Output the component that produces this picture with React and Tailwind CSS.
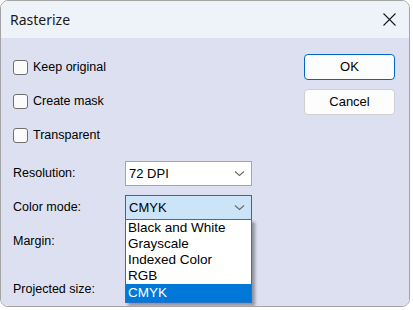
import React from "react";

const body = { fontFamily: '"Liberation Sans", Arial, sans-serif' };

function Check({ label }) {
  return (
    <div className="h-[34px] flex items-center gap-[5px]">
      <div className="w-[15px] h-[15px] rounded-[3px] border border-[#6f6f6f] bg-[#fbfbfb]" />
      <span className="text-[12.5px] text-black">{label}</span>
    </div>
  );
}

function Chevron() {
  return (
    <svg width="11" height="7" viewBox="0 0 11 7" className="mr-[6px]">
      <path d="M1 1.5 L5.5 5.5 L10 1.5" fill="none" stroke="#6a6a6a" strokeWidth="1.1" />
    </svg>
  );
}

function Select({ value, active }) {
  return (
    <div
      className={
        "w-[127px] h-[25px] flex items-center justify-between pl-[3px] border " +
        (active ? "bg-[#cce4f7] border-[#0078d7]" : "bg-white border-[#a5a5a5]")
      }
    >
      <span className="text-[13px] text-black">{value}</span>
      <Chevron />
    </div>
  );
}

export default function App() {
  const items = ["Black and White", "Grayscale", "Indexed Color", "RGB"];
  return (
    <div className="w-[413px] h-[310px] bg-white" style={body}>
      <div className="w-[410px] h-[307px] rounded-[8px] border border-[#a3a3a3] overflow-hidden flex flex-col">
        <div className="h-[37px] bg-[#eef2f9] flex items-center justify-between pl-[9px] pr-[13px] shrink-0">
          <span
            className="text-[14px] text-[#1a1a1a]"
            style={{ fontFamily: '"Noto Sans", sans-serif' }}
          >
            Rasterize
          </span>
          <svg width="13" height="13" viewBox="0 0 13 13">
            <path d="M0.5 0.5 L12.5 12.5 M12.5 0.5 L0.5 12.5" stroke="#1a1a1a" strokeWidth="1.1" />
          </svg>
        </div>
        <div className="flex-1 bg-[#dce0f0] flex justify-between pl-[12px] pr-[14px]">
          <div className="flex flex-col pt-[12px] relative">
            <Check label="Keep original" />
            <Check label="Create mask" />
            <Check label="Transparent" />
            <div className="mt-[9px] flex items-center h-[25px]">
              <span className="w-[112px] text-[12.5px]">Resolution:</span>
              <Select value="72 DPI" />
            </div>
            <div className="mt-[9px] flex items-center h-[25px] relative">
              <span className="w-[112px] text-[12.5px]">Color mode:</span>
              <Select value="CMYK" active />
              <div className="absolute left-[112px] top-[24px] w-[127px] bg-white border border-[#2a72c4] shadow-[3px_3px_3px_rgba(0,0,0,0.35)] z-10">
                {items.map((t) => (
                  <div key={t} className="h-[16px] flex items-center pl-[2px] text-[13.5px] text-black leading-none">
                    {t}
                  </div>
                ))}
                <div className="h-[18px] flex items-center pl-[2px] text-[13.5px] text-white bg-[#0078d7] leading-none">
                  CMYK
                </div>
              </div>
            </div>
            <div className="mt-[9px] h-[25px] flex items-center">
              <span className="text-[12.5px]">Margin:</span>
            </div>
            <div className="mt-[23px] h-[25px] flex items-center">
              <span className="text-[12.5px]">Projected size:</span>
            </div>
          </div>
          <div className="flex flex-col pt-[16px] gap-[9px]">
            <div className="w-[91px] h-[26px] rounded-[4px] border border-[#0067c0] bg-[#fdfdfd] flex items-center justify-center text-[13px]">
              OK
            </div>
            <div className="w-[91px] h-[26px] rounded-[4px] border border-[#d0d0d0] bg-[#fdfdfd] flex items-center justify-center text-[13px]">
              Cancel
            </div>
          </div>
        </div>
      </div>
    </div>
  );
}
